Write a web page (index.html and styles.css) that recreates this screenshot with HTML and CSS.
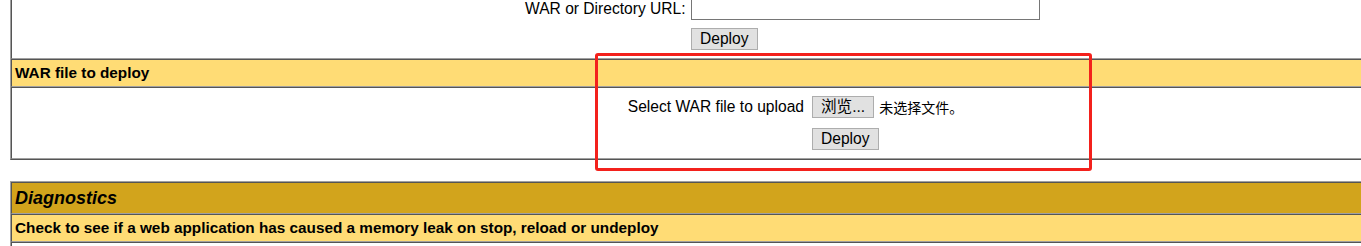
FILE: index.html
```html
<!DOCTYPE html>
<html lang="en">
<head>
    <meta charset="UTF-8">
    <title>Tomcat Web Application Manager</title>
    <link rel="stylesheet" href="styles.css">
</head>
<body>
    <!-- Deploy panel (top rows scrolled out of view) -->
    <table class="panel panel-deploy">
        <tr>
            <td class="panel-cell">
                <form class="form-grid form-url">
                    <label class="form-label" for="deployPath">WAR or Directory URL:</label>
                    <input class="text-input" type="text" id="deployPath">
                    <span></span>
                    <button class="btn" type="button">Deploy</button>
                </form>
            </td>
        </tr>
        <tr>
            <td class="row-title">WAR file to deploy</td>
        </tr>
        <tr>
            <td class="panel-cell">
                <form class="form-grid form-upload">
                    <span class="form-label">Select WAR file to upload</span>
                    <span class="file-field">
                        <button class="btn btn-browse" type="button">浏览...</button>
                        <span class="file-name">未选择文件。</span>
                    </span>
                    <span></span>
                    <button class="btn" type="button">Deploy</button>
                </form>
            </td>
        </tr>
    </table>

    <table class="panel panel-diag">
        <tr>
            <td class="page-title">Diagnostics</td>
        </tr>
        <tr>
            <td class="row-title">Check to see if a web application has caused a memory leak on stop, reload or undeploy</td>
        </tr>
        <tr>
            <td class="panel-cell panel-cell-empty"></td>
        </tr>
    </table>

    <!-- red annotation box drawn over the upload form -->
    <div class="annotation"></div>
</body>
</html>
```

FILE: styles.css
```css
body {
    margin: 0;
    padding: 0 0 0 10px;
    background: #ffffff;
    color: #000000;
    font-family: "Liberation Sans", Arial, sans-serif;
    font-size: 15.6px;
    overflow: hidden;
}

.panel {
    width: 1545px;
    border-collapse: separate;
    border-spacing: 0;
    border: 1px solid;
    border-color: #a0a0a0 #555555 #555555 #a0a0a0;
}

.panel td {
    border: 1px solid;
    border-color: #555555 #a0a0a0 #a0a0a0 #555555;
    padding: 3px;
}

.panel-deploy {
    margin-top: -12px;
}

.panel-diag {
    margin-top: 21px;
}

.panel .panel-cell {
    padding: 8px 3px;
}

.panel .panel-cell-empty {
    height: 40px;
}

.row-title {
    background: #ffdc75;
    font-weight: bold;
    font-size: 15.3px;
    line-height: 20px;
}

.page-title {
    background: #d2a41c;
    font-weight: bold;
    font-style: italic;
    font-size: 18px;
    line-height: 24px;
}

.form-grid {
    display: grid;
    justify-content: center;
    align-items: center;
    margin: 0;
}

.form-url {
    grid-template-columns: 160px 349px;
    column-gap: 6px;
    row-gap: 8px;
}

.form-upload {
    grid-template-columns: 180px 129px;
    column-gap: 8px;
    row-gap: 10px;
}

.form-label {
    text-align: right;
    white-space: nowrap;
}

.text-input {
    width: 349px;
    height: 22px;
    box-sizing: border-box;
    border: 1px solid #767676;
    padding: 0 2px;
    margin: 0;
    font: inherit;
}

.btn {
    justify-self: start;
    height: 22px;
    box-sizing: border-box;
    margin: 0;
    padding: 0 8px;
    border: 1px solid #adadad;
    border-radius: 0;
    background: #e1e1e1;
    color: #000000;
    font-family: "Liberation Sans", Arial, sans-serif;
    font-size: 15.6px;
    line-height: 20px;
}

.file-field {
    display: flex;
    align-items: center;
    gap: 5px;
    white-space: nowrap;
}

.btn-browse {
    padding: 0 8px;
    font-family: "Liberation Sans", "Noto Sans CJK SC", sans-serif;
}

.file-name {
    font-family: "Noto Sans CJK SC", sans-serif;
    font-size: 14px;
}

.annotation {
    position: absolute;
    left: 595px;
    top: 53px;
    width: 497px;
    height: 118px;
    box-sizing: border-box;
    border: 3px solid #f3211c;
    border-radius: 3px;
}
```
